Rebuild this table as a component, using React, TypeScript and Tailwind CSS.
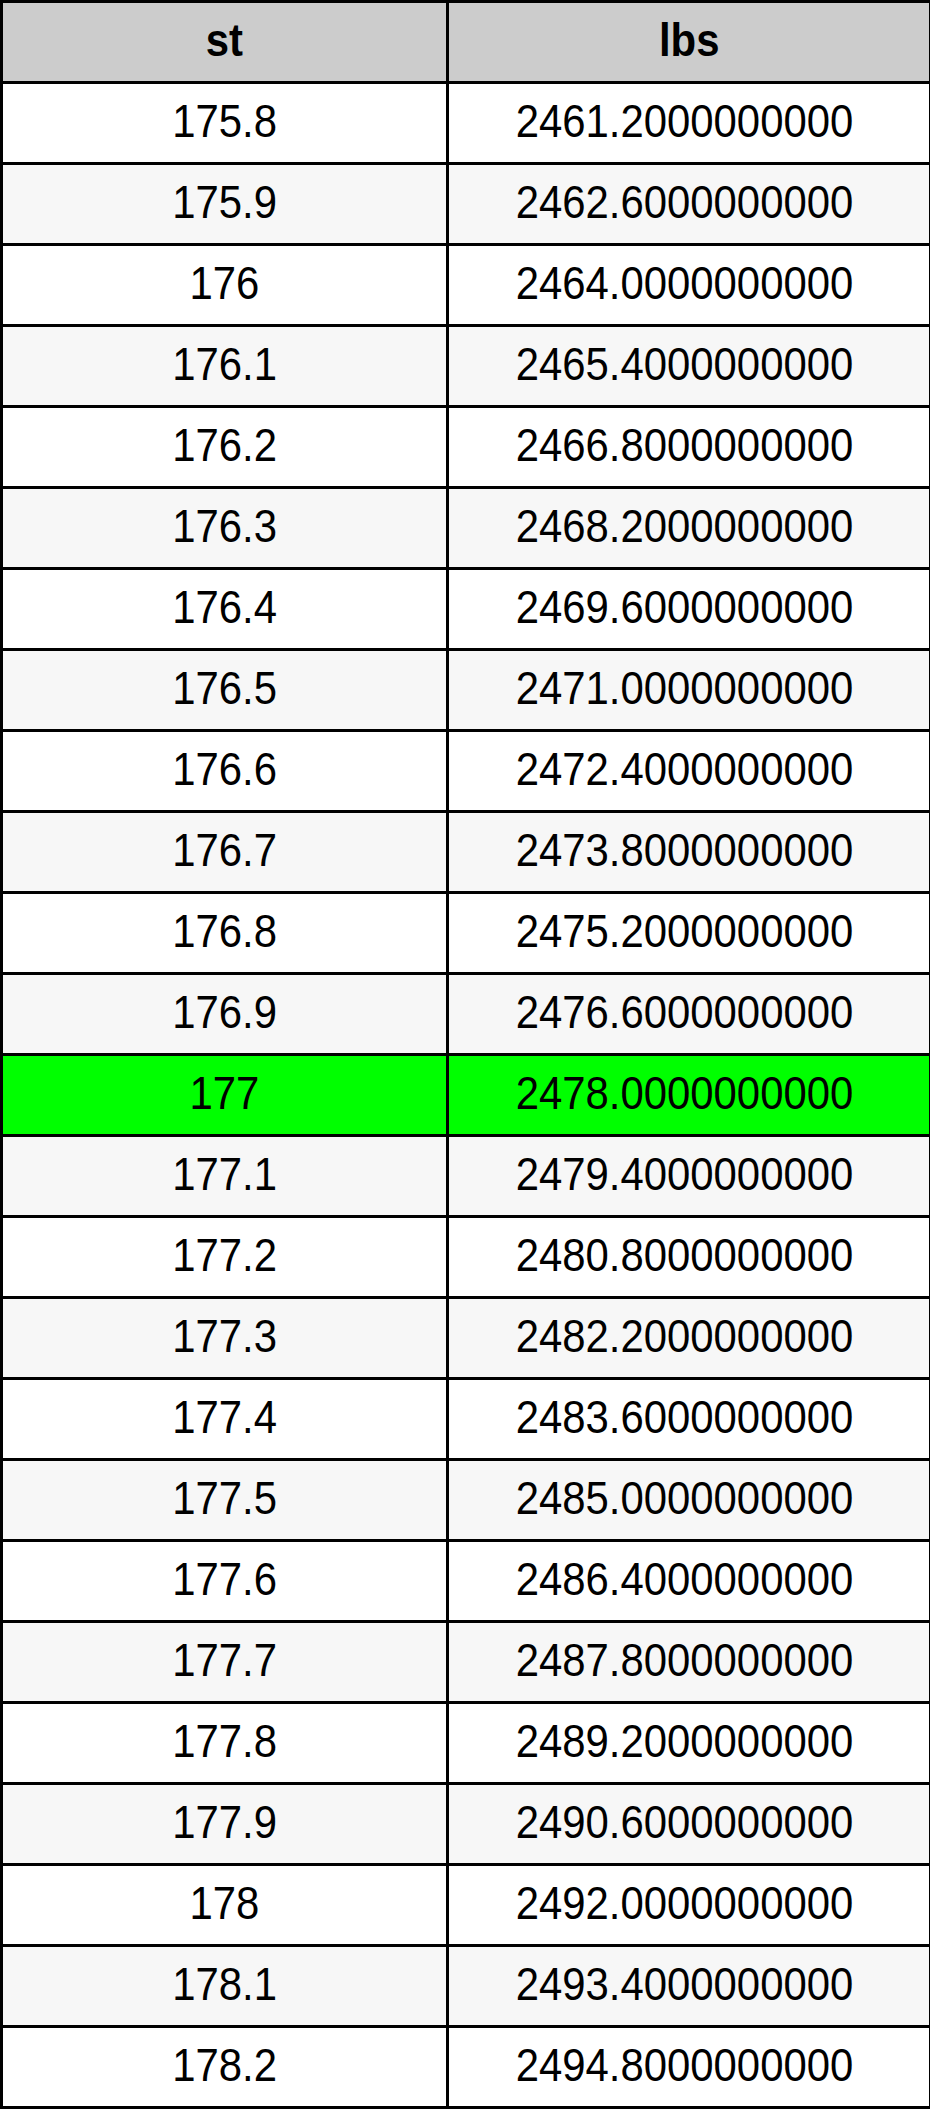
const rows = Array.from({ length: 25 }, (_, i) => {
  const st = (1758 + i) / 10;
  return { st: String(st), lbs: (st * 14).toFixed(10) };
});

// the source renders a condensed Helvetica; squeeze Liberation Sans to match
function Cell({ children }: { children: React.ReactNode }) {
  return <span className="inline-block scale-x-[0.91] whitespace-nowrap">{children}</span>;
}

export default function App() {
  return (
    <div className="bg-white min-h-screen">
      <table
        className="border-collapse table-fixed w-[929px] text-black text-[46px] leading-none"
        style={{ fontFamily: '"Liberation Sans", Arial, sans-serif' }}
      >
        <colgroup>
          <col className="w-[446px]" />
          <col className="w-[483px]" />
        </colgroup>
        <thead>
          <tr className="h-[81px] bg-[#cccccc]">
            <th className="border-[3px] border-black font-bold text-center pb-[4px]">
              <Cell>st</Cell>
            </th>
            <th className="border-[3px] border-black font-bold text-center pb-[4px]">
              <Cell>lbs</Cell>
            </th>
          </tr>
        </thead>
        <tbody>
          {rows.map((r, i) => (
            <tr
              key={r.st}
              className={
                "h-[81px] " +
                (r.st === "177" ? "bg-[#00ff00]" : i % 2 === 1 ? "bg-[#f7f7f7]" : "bg-white")
              }
            >
              <td className="border-[3px] border-black text-center pb-[4px]">
                <Cell>{r.st}</Cell>
              </td>
              <td className="border-[3px] border-black text-center pb-[4px] pr-[10px]">
                <Cell>{r.lbs}</Cell>
              </td>
            </tr>
          ))}
        </tbody>
      </table>
    </div>
  );
}
